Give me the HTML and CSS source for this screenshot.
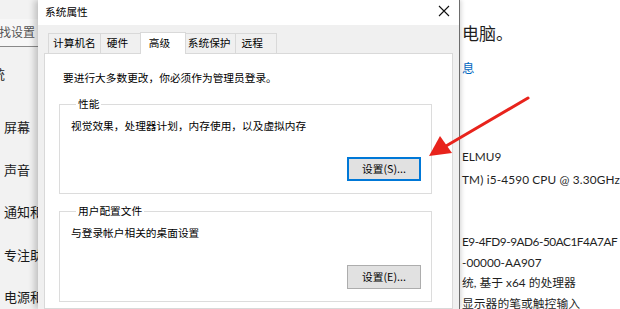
FILE: index.html
```html
<!DOCTYPE html>
<html lang="zh-CN">
<head>
<meta charset="utf-8">
<title>系统属性</title>
<link rel="stylesheet" href="styles.css">
</head>
<body>
<div class="screen">
  <aside class="settings">
    <div class="search">找设置</div>
    <div class="heading">统</div>
    <ul class="nav">
      <li>屏幕</li>
      <li>声音</li>
      <li>通知和</li>
      <li>专注助</li>
      <li>电源和</li>
    </ul>
  </aside>

  <section class="dialog">
    <header class="titlebar">
      <span class="title">系统属性</span>
      <svg class="close" width="12" height="12" viewBox="0 0 12 12"><path d="M1 1 L11 11 M11 1 L1 11" stroke="#111" stroke-width="1.1" fill="none"/></svg>
    </header>
    <div class="body">
      <div class="tabs">
        <span class="tab">计算机名</span>
        <span class="tab short">硬件</span>
        <span class="tab short active">高级</span>
        <span class="tab">系统保护</span>
        <span class="tab short">远程</span>
      </div>
      <div class="panel">
        <p class="note">要进行大多数更改，你必须作为管理员登录。</p>
        <fieldset class="group perf">
          <legend>性能</legend>
          <p class="desc">视觉效果，处理器计划，内存使用，以及虚拟内存</p>
          <div class="actions"><button class="btn default">设置(S)...</button></div>
        </fieldset>
        <fieldset class="group profile">
          <legend>用户配置文件</legend>
          <p class="desc">与登录帐户相关的桌面设置</p>
          <div class="actions"><button class="btn">设置(E)...</button></div>
        </fieldset>
      </div>
    </div>
  </section>

  <main class="about">
    <div class="big">电脑。</div>
    <div class="link">息</div>
    <div class="spec name">ELMU9</div>
    <div class="spec cpu">TM) i5-4590 CPU @ 3.30GHz</div>
    <div class="spec id">E9-4FD9-9AD6-50AC1F4A7AF</div>
    <div class="spec">-00000-AA907</div>
    <div class="spec">统, 基于 x64 的处理器</div>
    <div class="spec">显示器的笔或触控输入</div>
  </main>

  <svg class="arrow" width="620" height="309" viewBox="0 0 620 309">
    <line x1="528" y1="98" x2="446" y2="146" stroke="#e8231c" stroke-width="3" stroke-linecap="round"/>
    <polygon points="429,156 440,136 452,153" fill="#e8231c"/>
  </svg>
</div>
</body>
</html>
```
FILE: styles.css
```css
* { box-sizing: border-box; }
html, body { margin: 0; padding: 0; }
body {
  width: 620px;
  height: 309px;
  overflow: hidden;
  font-family: "Noto Sans CJK SC", "Noto Sans", sans-serif;
  font-size: 10.7px;
  color: #000;
  background: #fff;
}
.screen {
  position: relative;
  display: flex;
  width: 620px;
  height: 309px;
  overflow: hidden;
}

/* left settings window */
.settings {
  width: 38px;
  flex: none;
  background: #f2f2f2;
  font-size: 13px;
  color: #1a1a1a;
  overflow: hidden;
  white-space: nowrap;
}
.search {
  height: 28px;
  margin-top: 19px;
  font-size: 12px;
  line-height: 26px;
  background: #f7f7f7;
  border-bottom: 1px solid #8a8a8a;
  color: #555;
  text-indent: -1px;
}
.heading {
  margin-top: 17px;
  line-height: 20px;
  text-indent: -8px;
}
.nav {
  list-style: none;
  margin: 33px 0 0 0;
  padding: 0;
}
.nav li {
  height: 42.5px;
  line-height: 20px;
  padding-left: 4px;
}

/* dialog */
.dialog {
  width: 422px;
  flex: none;
  background: #f0f0f0;
  border-right: 1px solid #6d6d6d;
  box-shadow: -4px 0 6px rgba(0,0,0,0.18), 2px 0 4px rgba(0,0,0,0.12);
  z-index: 1;
  display: flex;
  flex-direction: column;
}
.titlebar {
  height: 25px;
  background: #fff;
  display: flex;
  align-items: center;
  justify-content: space-between;
  padding: 0 9px 2px 7px;
}
.title { line-height: 16px; }
.close { display: block; margin-top: -2px; }
.body {
  flex: 1;
  padding: 7px 6px 0 6px;
  display: flex;
  flex-direction: column;
}
.tabs {
  display: flex;
  align-items: flex-end;
  height: 21px;
  padding-left: 4px;
  position: relative;
  z-index: 2;
}
.tab {
  height: 20px;
  line-height: 18px;
  min-width: 42px;
  padding: 0 4px;
  border: 1px solid #d9d9d9;
  border-bottom: none;
  margin-left: -1px;
  background: #f0f0f0;
  white-space: nowrap;
}
.tab:first-child { margin-left: 0; }
.tab.short { padding-left: 6px; }
.tab.active {
  height: 22px;
  min-width: 46px;
  margin-bottom: -1px;
  background: #fff;
  padding-left: 8px;
  line-height: 20px;
  margin-left: -2px;
  margin-right: -2px;
  position: relative;
  z-index: 1;
}
.panel {
  flex: 1;
  background: #fff;
  border: 1px solid #d9d9d9;
  padding: 16px 20px 0 14px;
}
.note {
  margin: 0 0 0 4px;
  line-height: 16px;
}
.group {
  margin: 11px 0 0 0;
  border: 1px solid #dcdcdc;
  padding: 0 10px 12px 11px;
  min-width: 0;
}
.group legend {
  padding: 0 2px;
  margin-left: 5px;
  line-height: 14px;
}
.group.profile { margin-top: 10px; }
.desc {
  margin: 7px 0 0 0;
  line-height: 16px;
}
.actions {
  display: flex;
  justify-content: flex-end;
}
.perf .actions { margin-top: 23px; }
.profile .actions { margin-top: 24px; }
.btn {
  width: 74px;
  height: 24px;
  font-family: "Noto Sans CJK SC", "Noto Sans", sans-serif;
  font-size: 10.7px;
  line-height: 20px;
  padding: 0;
  background: #e1e1e1;
  border: 1px solid #adadad;
  color: #000;
}
.btn.default { border: 2px solid #0078d7; line-height: 18px; }

/* right about page */
.about {
  flex: 1;
  padding-left: 2px;
  white-space: nowrap;
  overflow: hidden;
  font-family: "Lato", "Noto Sans CJK SC", sans-serif;
  color: #1f1f1f;
}
.big {
  margin-top: 20px;
  font-family: "Noto Sans CJK SC", sans-serif;
  font-size: 17px;
  line-height: 26px;
}
.link {
  margin-top: 13px;
  color: #0067c0;
  font-family: "Noto Sans CJK SC", sans-serif;
  font-size: 12.5px;
  line-height: 18px;
}
.spec {
  font-size: 11.8px;
  line-height: 20px;
  height: 20.5px;
}
.spec.name { margin-top: 70px; }
.spec.cpu { margin-top: 2px; letter-spacing: 0.15px; }
.spec.id { margin-top: 42px; letter-spacing: -0.45px; }

.arrow {
  position: absolute;
  left: 0;
  top: 0;
  z-index: 5;
  pointer-events: none;
}
```
